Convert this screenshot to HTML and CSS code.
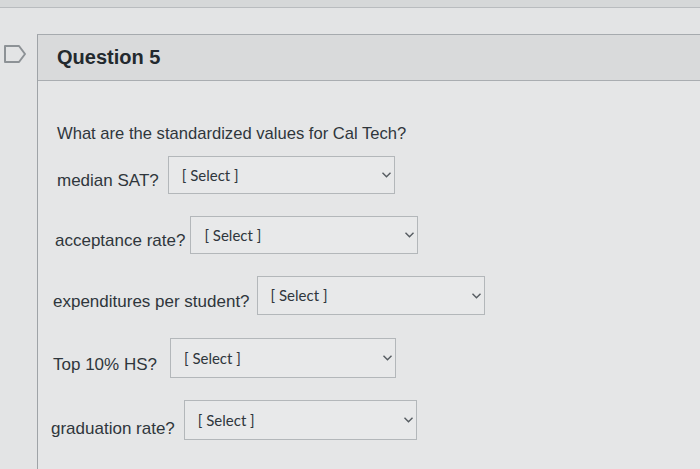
FILE: index.html
```html
<!DOCTYPE html>
<html>
<head>
<meta charset="utf-8">
<link rel="stylesheet" href="styles.css">
</head>
<body>
<div class="topbar"></div>
<div class="page">
  <div class="gutter">
    <svg class="flag" width="24" height="20" viewBox="0 0 24 20">
      <path d="M2 2 H16 L22 10 L16 18 H2 Z" fill="none" stroke="#8d9296" stroke-width="2" stroke-linejoin="round"/>
    </svg>
  </div>
  <div class="card">
    <div class="card-header"><h2 class="title">Question 5</h2></div>
    <div class="card-body">
      <p class="prompt">What are the standardized values for Cal Tech?</p>
      <div class="row r1"><span class="label">median SAT?</span><div class="select"><span>[ Select ]</span><svg class="chev" width="11" height="8" viewBox="0 0 11 8"><path d="M1.5 1.8 L5.5 5.8 L9.5 1.8" fill="none" stroke="#555b60" stroke-width="1.4"/></svg></div></div>
      <div class="row r2"><span class="label">acceptance rate?</span><div class="select"><span>[ Select ]</span><svg class="chev" width="11" height="8" viewBox="0 0 11 8"><path d="M1.5 1.8 L5.5 5.8 L9.5 1.8" fill="none" stroke="#555b60" stroke-width="1.4"/></svg></div></div>
      <div class="row r3"><span class="label">expenditures per student?</span><div class="select"><span>[ Select ]</span><svg class="chev" width="11" height="8" viewBox="0 0 11 8"><path d="M1.5 1.8 L5.5 5.8 L9.5 1.8" fill="none" stroke="#555b60" stroke-width="1.4"/></svg></div></div>
      <div class="row r4"><span class="label">Top 10% HS?</span><div class="select"><span>[ Select ]</span><svg class="chev" width="11" height="8" viewBox="0 0 11 8"><path d="M1.5 1.8 L5.5 5.8 L9.5 1.8" fill="none" stroke="#555b60" stroke-width="1.4"/></svg></div></div>
      <div class="row r5"><span class="label">graduation rate?</span><div class="select"><span>[ Select ]</span><svg class="chev" width="11" height="8" viewBox="0 0 11 8"><path d="M1.5 1.8 L5.5 5.8 L9.5 1.8" fill="none" stroke="#555b60" stroke-width="1.4"/></svg></div></div>
    </div>
  </div>
</div>
</body>
</html>
```

FILE: styles.css
```css
html, body {
  margin: 0;
  padding: 0;
  background: #e3e4e5;
  overflow: hidden;
  height: 469px;
  font-family: "Liberation Sans", Arial, sans-serif;
  color: #2b3238;
}
.topbar {
  height: 7px;
  background: #d6d8d9;
  border-bottom: 1px solid #b9bcbf;
}
.page {
  display: flex;
  padding-top: 26px;
  height: 435px;
}
.gutter {
  width: 37px;
  flex: none;
  padding-top: 10px;
  box-sizing: border-box;
}
.flag {
  display: block;
  margin-left: 3px;
}
.card {
  flex: 1;
  border-left: 1px solid #9fa3a7;
  border-top: 1px solid #a6aaae;
  background: #e5e6e7;
}
.card-header {
  height: 45px;
  background: #d9dadb;
  border-bottom: 1px solid #a9adb1;
  display: flex;
  align-items: center;
  padding-left: 19px;
}
.title {
  margin: 0;
  font-size: 20px;
  font-weight: bold;
  color: #23292e;
}
.card-body {
  padding: 43px 0 0 19px;
}
.prompt {
  margin: 0 0 13px 0;
  font-size: 16.6px;
  line-height: 19px;
  color: #2f363c;
}
.row {
  display: flex;
  align-items: center;
  gap: 9px;
  height: 38px;
  margin-bottom: 22px;
}
.r2 { margin-left: -2px; gap: 5px; }
.r3 { margin-left: -4px; gap: 7px; height: 39px; margin-bottom: 23px; }
.r4 { margin-left: -4px; gap: 13px; height: 40px; }
.r5 { margin-left: -6px; gap: 9px; height: 40px; }
.label {
  font-size: 17px;
  color: #2f363c;
  padding-top: 11px;
}
.r2 .label, .r3 .label { padding-top: 12px; }
.r4 .label { padding-top: 14px; }
.r5 .label { padding-top: 18px; }
.select {
  width: 227px;
  height: 100%;
  box-sizing: border-box;
  border: 1px solid #b3b7ba;
  background: #e8e9ea;
  display: flex;
  align-items: center;
  justify-content: space-between;
  padding: 0 2px 0 13px;
  font-family: Lato, "Liberation Sans", sans-serif;
  font-size: 15px;
  color: #2f363c;
}
.r2 .select, .r3 .select { width: 228px; }
.r4 .select { width: 226px; }
.r5 .select { width: 233px; }
.select span {
  padding-bottom: 1px;
}
.chev {
  display: block;
}
```
